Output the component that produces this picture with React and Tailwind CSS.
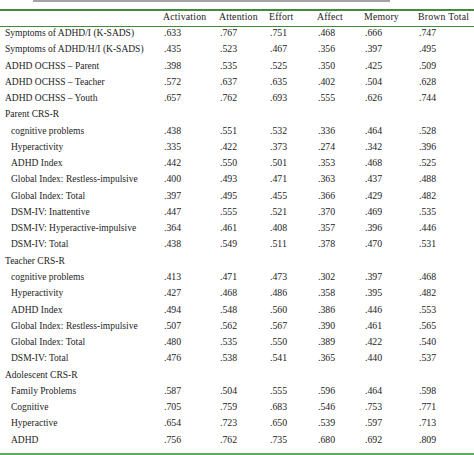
import React from "react";

const rows = [
  { l: "Symptoms of ADHD/I (K-SADS)", v: [".633", ".767", ".751", ".468", ".666", ".747"] },
  { l: "Symptoms of ADHD/H/I (K-SADS)", v: [".435", ".523", ".467", ".356", ".397", ".495"] },
  { l: "ADHD OCHSS \u2013 Parent", v: [".398", ".535", ".525", ".350", ".425", ".509"] },
  { l: "ADHD OCHSS \u2013 Teacher", v: [".572", ".637", ".635", ".402", ".504", ".628"] },
  { l: "ADHD OCHSS \u2013 Youth", v: [".657", ".762", ".693", ".555", ".626", ".744"] },
  { l: "Parent CRS-R", h: true },
  { l: "cognitive problems", i: true, v: [".438", ".551", ".532", ".336", ".464", ".528"] },
  { l: "Hyperactivity", i: true, v: [".335", ".422", ".373", ".274", ".342", ".396"] },
  { l: "ADHD Index", i: true, v: [".442", ".550", ".501", ".353", ".468", ".525"] },
  { l: "Global Index: Restless-impulsive", i: true, v: [".400", ".493", ".471", ".363", ".437", ".488"] },
  { l: "Global Index: Total", i: true, v: [".397", ".495", ".455", ".366", ".429", ".482"] },
  { l: "DSM-IV: Inattentive", i: true, v: [".447", ".555", ".521", ".370", ".469", ".535"] },
  { l: "DSM-IV: Hyperactive-impulsive", i: true, v: [".364", ".461", ".408", ".357", ".396", ".446"] },
  { l: "DSM-IV: Total", i: true, v: [".438", ".549", ".511", ".378", ".470", ".531"] },
  { l: "Teacher CRS-R", h: true },
  { l: "cognitive problems", i: true, v: [".413", ".471", ".473", ".302", ".397", ".468"] },
  { l: "Hyperactivity", i: true, v: [".427", ".468", ".486", ".358", ".395", ".482"] },
  { l: "ADHD Index", i: true, v: [".494", ".548", ".560", ".386", ".446", ".553"] },
  { l: "Global Index: Restless-impulsive", i: true, v: [".507", ".562", ".567", ".390", ".461", ".565"] },
  { l: "Global Index: Total", i: true, v: [".480", ".535", ".550", ".389", ".422", ".540"] },
  { l: "DSM-IV: Total", i: true, v: [".476", ".538", ".541", ".365", ".440", ".537"] },
  { l: "Adolescent CRS-R", h: true },
  { l: "Family Problems", i: true, v: [".587", ".504", ".555", ".596", ".464", ".598"] },
  { l: "Cognitive", i: true, v: [".705", ".759", ".683", ".546", ".753", ".771"] },
  { l: "Hyperactive", i: true, v: [".654", ".723", ".650", ".539", ".597", ".713"] },
  { l: "ADHD", i: true, v: [".756", ".762", ".735", ".680", ".692", ".809"] },
];

const heads = ["Activation", "Attention", "Effort", "Affect", "Memory", "Brown Total"];
const grid = "grid grid-cols-[163px_56px_50px_48px_47px_54px_1fr]";

export default function App() {
  return (
    <div
      className="w-[474px] h-[455px] bg-white text-[#1c1c1c] text-[9.8px] overflow-hidden"
      style={{ fontFamily: '"Liberation Serif", "Times New Roman", serif' }}
    >
      <div className="ml-[33px] w-[357px] h-[2px] bg-[#a3a3a3]" />
      <div className="mt-[7px] h-[1.5px] bg-[#3f8c3f]" />
      <div className={`${grid} h-[15px] items-center leading-[12px]`}>
        <div />
        {heads.map((h) => (
          <div key={h} className="tracking-[0.2px] whitespace-nowrap">{h}</div>
        ))}
        <div />
      </div>
      <div className="h-[1.5px] bg-[#3f8c3f]" />
      <div>
        {rows.map((r, idx) => (
          <div key={idx} className={`${grid} h-[16.28px] leading-[12px] items-start`}>
            <div className={r.i ? "pl-[11px] whitespace-nowrap text-[9.5px]" : "pl-[5px] whitespace-nowrap text-[9.5px]"}>{r.l}</div>
            {r.v ? r.v.map((v, j) => <div key={j} className="pl-[1px]">{v}</div>) : null}
          </div>
        ))}
      </div>
      <div className="mt-[3px] h-[3px] bg-[#5eab5e]" />
    </div>
  );
}
